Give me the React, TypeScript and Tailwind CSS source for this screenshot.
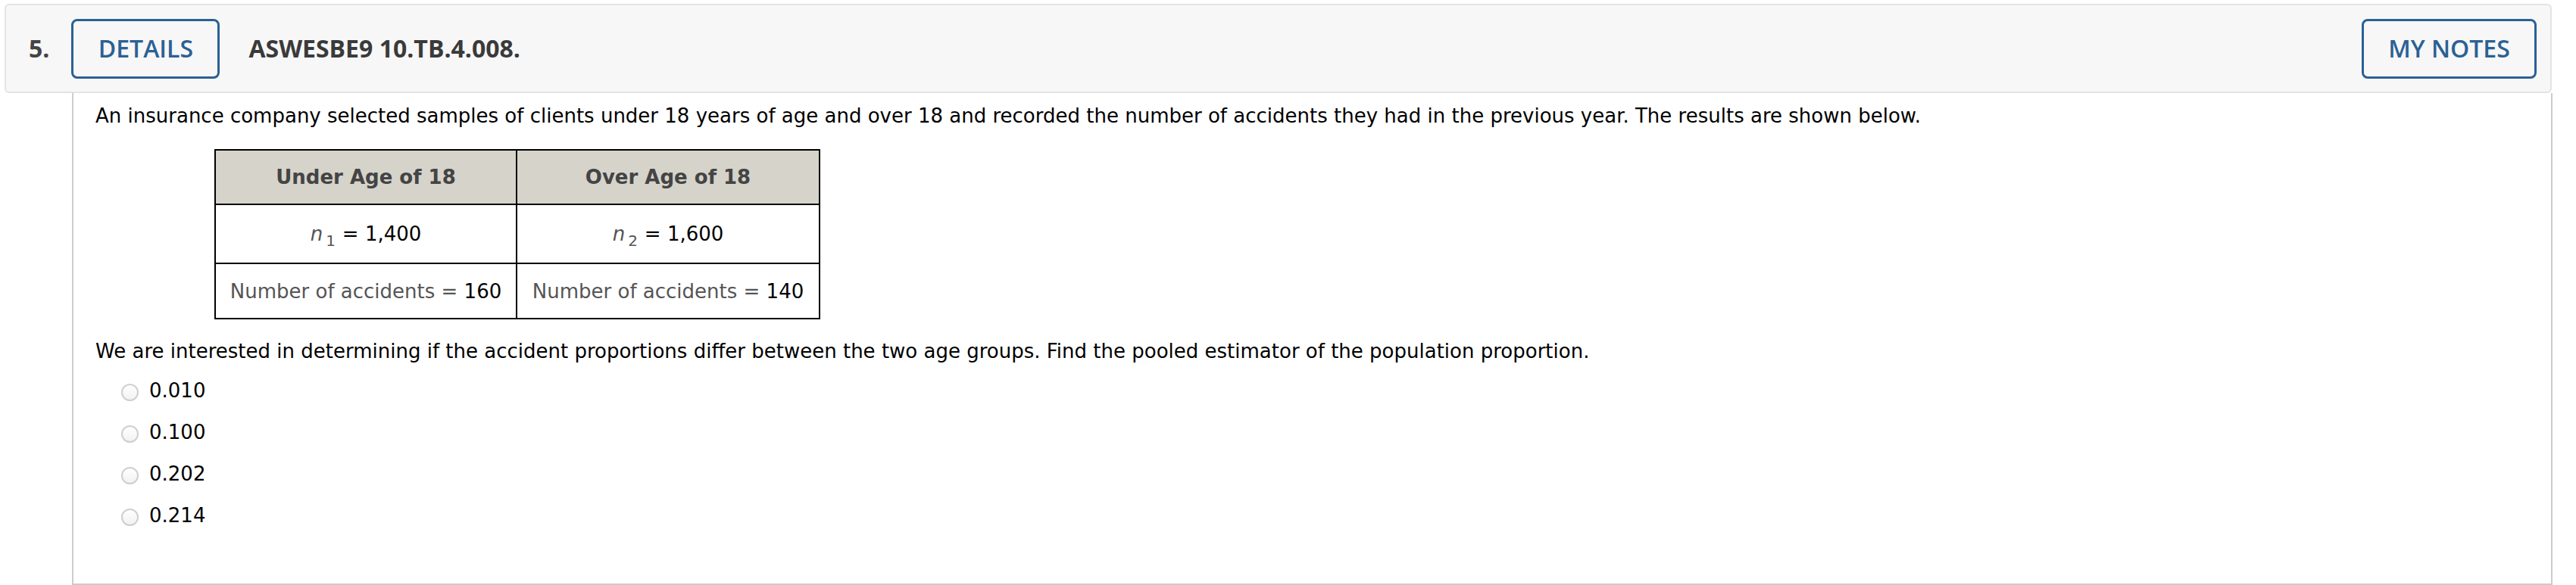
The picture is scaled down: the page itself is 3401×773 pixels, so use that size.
import React from 'react'

const BODY = { fontFamily: '"DejaVu Sans", Verdana, sans-serif' }
const HEAD = { fontFamily: '"Open Sans", "Liberation Sans", sans-serif' }

const CHOICES = ['0.010', '0.100', '0.202', '0.214']

function Radio() {
  return (
    <span className="block h-[23px] w-[23px] flex-shrink-0 rounded-full border-2 border-[#cfcfcf] bg-gradient-to-b from-white to-[#f2f2f2]" />
  )
}

function SampleSize({ idx, value }: { idx: string; value: string }) {
  return (
    <>
      <span className="italic text-[#555]">n</span>
      <span className="relative top-[9px] ml-[4px] text-[20px] text-[#555]">{idx}</span>
      <span className="ml-[9px]">= {value}</span>
    </>
  )
}

export default function App() {
  return (
    <div className="h-[773px] w-[3401px] overflow-hidden bg-white">
      <div
        style={HEAD}
        className="ml-[6px] mt-[5px] flex h-[118px] w-[3363px] items-center rounded-[6px] border-2 border-[#e3e3e3] bg-[#f7f7f7] pl-[30px] pr-[18px]"
      >
        <span className="text-[32px] font-bold text-[#444]">5.</span>
        <button className="ml-[29px] flex h-[79px] w-[196px] items-center justify-center rounded-[8px] border-[3px] border-[#2b6194] text-[32px] font-semibold text-[#2b6194]">
          DETAILS
        </button>
        <span className="ml-[38px] text-[32px] font-bold text-[#3a3a3a]">ASWESBE9 10.TB.4.008.</span>
        <button className="ml-auto flex h-[79px] w-[231px] items-center justify-center rounded-[8px] border-[3px] border-[#2b6194] text-[32px] font-semibold text-[#2b6194]">
          MY NOTES
        </button>
      </div>

      <div style={BODY} className="ml-[95px] h-[650px] w-[3275px] border-x-2 border-b-2 border-[#cccccc] pl-[29px] pt-[12px] text-[26px] leading-[36px] text-black">
        <p>
          An insurance company selected samples of clients under 18 years of age and over 18 and recorded the number of accidents they had in the previous year. The results are shown below.
        </p>

        <div className="ml-[157px] mt-[26px] grid w-[800px] grid-cols-2 border-2 border-black">
          <div className="flex h-[72px] items-center justify-center border-b-2 border-r-2 border-black bg-[#d6d3cb] font-bold text-[#444]">Under Age of 18</div>
          <div className="flex h-[72px] items-center justify-center border-b-2 border-black bg-[#d6d3cb] font-bold text-[#444]">Over Age of 18</div>
          <div className="flex h-[78px] items-center justify-center border-b-2 border-r-2 border-black">
            <SampleSize idx="1" value="1,400" />
          </div>
          <div className="flex h-[78px] items-center justify-center border-b-2 border-black">
            <SampleSize idx="2" value="1,600" />
          </div>
          <div className="flex h-[71px] items-center justify-center border-r-2 border-black">
            <span className="text-[#555]">Number of accidents =&nbsp;</span>
            <span>160</span>
          </div>
          <div className="flex h-[71px] items-center justify-center">
            <span className="text-[#555]">Number of accidents =&nbsp;</span>
            <span>140</span>
          </div>
        </div>

        <p className="mt-[24px]">
          We are interested in determining if the accident proportions differ between the two age groups. Find the pooled estimator of the population proportion.
        </p>

        <ul className="mt-[9px] flex flex-col pl-[34px]">
          {CHOICES.map(c => (
            <li key={c} className="flex h-[55px] items-center gap-[14px]">
              <Radio />
              <span className="-mt-[6px]">{c}</span>
            </li>
          ))}
        </ul>
      </div>
    </div>
  )
}
